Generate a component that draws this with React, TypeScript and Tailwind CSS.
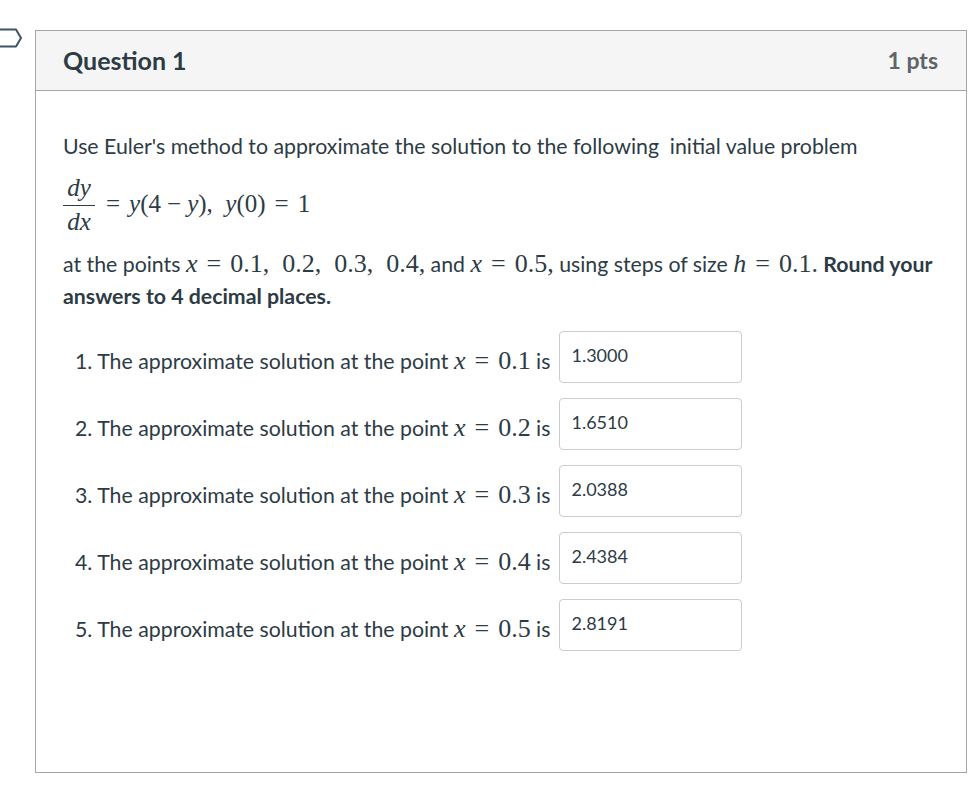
import React from "react";

const answers = [
  { x: "0.1", value: "1.3000" },
  { x: "0.2", value: "1.6510" },
  { x: "0.3", value: "2.0388" },
  { x: "0.4", value: "2.4384" },
  { x: "0.5", value: "2.8191" },
];

function V({ children }: { children: React.ReactNode }) {
  return <span className="italic">{children}</span>;
}

function Eq() {
  return <span className="mx-[9px]">=</span>;
}

function M({ children }: { children: React.ReactNode }) {
  return (
    <span className="font-['Liberation_Serif',serif] text-[26px] leading-none">
      {children}
    </span>
  );
}

export default function App() {
  return (
    <div className="relative h-[792px] w-[972px] bg-white font-['Lato',sans-serif] text-[#2d3b45]">
      {/* bookmark flag, partly off screen */}
      <svg
        className="absolute left-[-6px] top-[28px]"
        width="30"
        height="20"
        viewBox="0 0 30 20"
      >
        <path
          d="M1 1.5 H22 L27 10 L22 18.5 H1"
          fill="none"
          stroke="#3d5466"
          strokeWidth="2"
          strokeLinejoin="round"
        />
      </svg>

      <div className="absolute left-[35px] top-[30px] flex h-[743px] w-[932px] flex-col border border-[#a5a5a5]">
        <div className="flex h-[60px] shrink-0 items-center justify-between border-b border-[#a5a5a5] bg-[#f5f5f5] pl-[27px] pr-[28px]">
          <span className="text-[25px] font-bold">Question 1</span>
          <span className="text-[23px] font-bold text-[#5f6469]">1 pts</span>
        </div>

        <div className="pl-[27px] pr-[20px] pt-[40px] text-[21.3px]">
          <p className="leading-[30px]">
            Use Euler's method to approximate the solution to the following&nbsp; initial value problem
          </p>

          <div className="mt-[14px] flex items-center font-['Liberation_Serif',serif] text-[25px]">
            <span className="mr-[2px] inline-flex flex-col items-center leading-none">
              <span className="px-[2px] pb-[5px] italic">dy</span>
              <span className="h-px w-[32px] bg-[#2d3b45]" />
              <span className="px-[2px] pt-[3px] italic">dx</span>
            </span>
            <span className="mt-[-1px]">
              <Eq />
              <V>y</V>(4<span className="mx-[6px]">−</span>
              <V>y</V>),&nbsp; <V>y</V>(0)
              <Eq />1
            </span>
          </div>

          <p className="mt-[14px] leading-[32px]">
            at the points{" "}
            <M>
              <V>x</V>
              <Eq />
              0.1,&nbsp; 0.2,&nbsp; 0.3,&nbsp; 0.4,
            </M>{" "}
            and{" "}
            <M>
              <V>x</V>
              <Eq />
              0.5,
            </M>{" "}
            using steps of size{" "}
            <M>
              <V>h</V>
              <Eq />
              0.1.
            </M>{" "}
            <strong>Round your answers to 4 decimal places.</strong>
          </p>

          <div className="mt-[19px] flex flex-col gap-[15px] pl-[12px]">
            {answers.map((a, i) => (
              <div key={i} className="flex items-center">
                <span className="pt-[10px]">
                  {i + 1}. The approximate solution at the point{" "}
                  <M>
                    <V>x</V>
                    <Eq />
                    {a.x}
                  </M>{" "}
                  is
                </span>
                <input
                  readOnly
                  value={a.value}
                  className="ml-[9px] h-[52px] w-[183px] rounded-[4px] border border-[#c7cdd1] bg-white px-[11px] pb-[4px] text-[18px] text-[#2d3b45] outline-none"
                />
              </div>
            ))}
          </div>
        </div>
      </div>
    </div>
  );
}
